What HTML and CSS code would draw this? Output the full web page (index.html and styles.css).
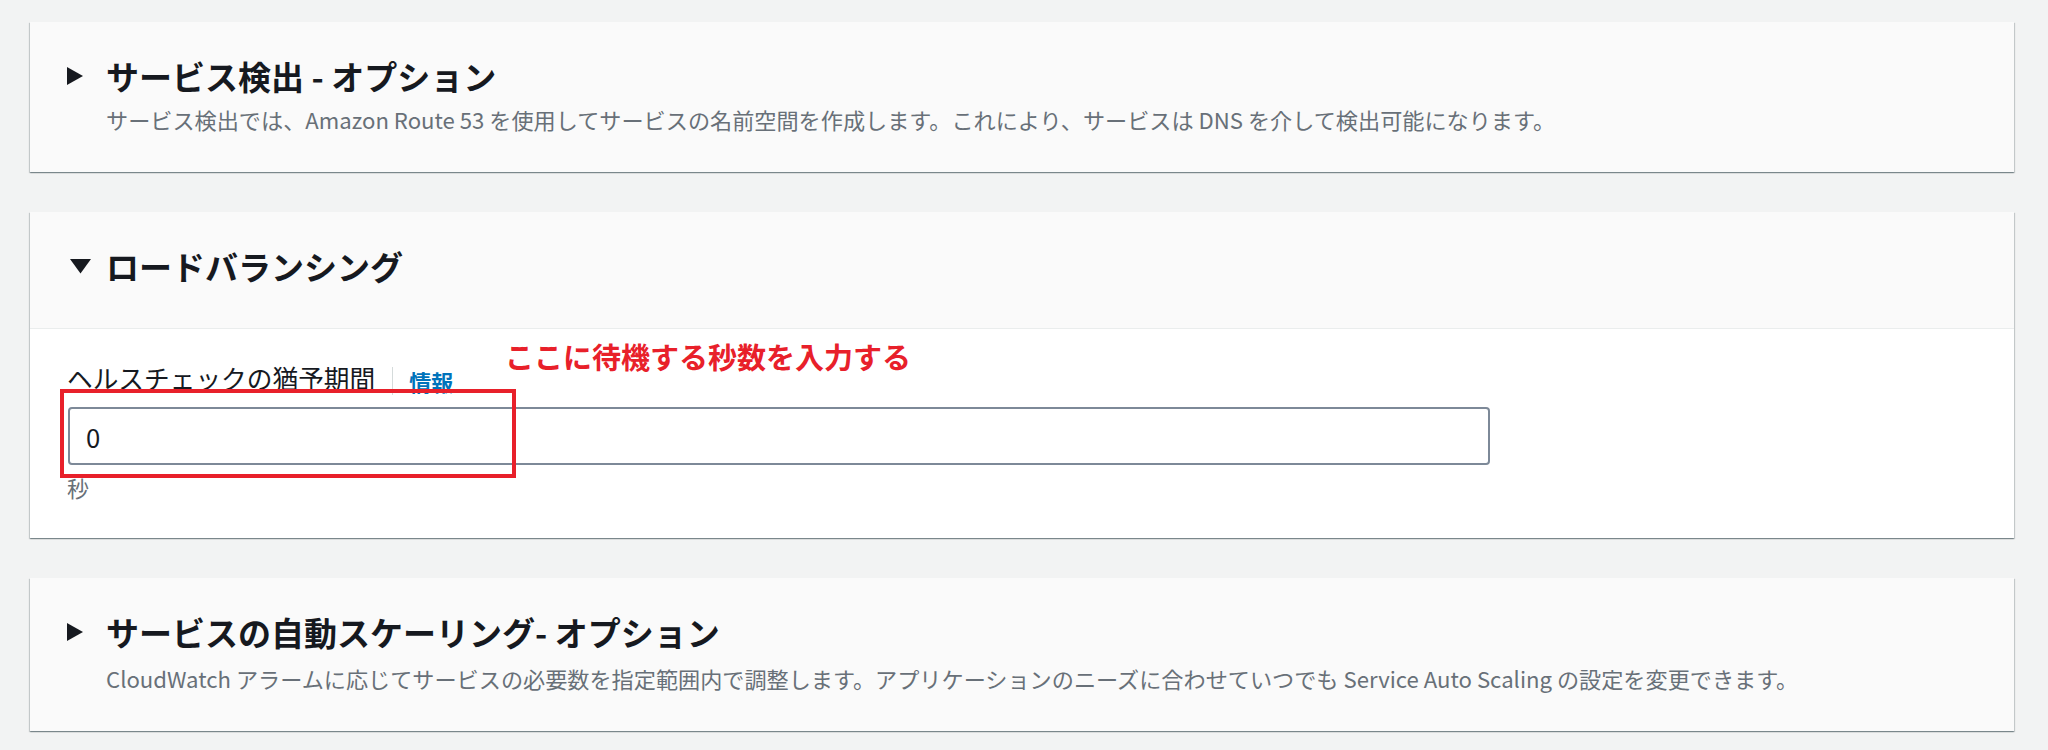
FILE: index.html
```html
<!DOCTYPE html>
<html lang="ja">

<head>
  <title>サービスの設定</title>
  <meta charset="utf-8">
  <meta name="viewport" content="width=device-width, initial-scale=1">

  <link rel="stylesheet" href="styles.css">
</head>

<body>

  <div class="page">

    <!-- service discovery, collapsed -->
    <div class="panel">
      <div class="panel-header">
        <div class="caret">
          <svg width="32" height="40" viewBox="0 0 32 40"><polygon points="5,11 21,20 5,29" fill="#16191f"/></svg>
        </div>
        <div class="heading">
          <h2 class="title">サービス検出 - オプション</h2>
          <div class="desc">サービス検出では、Amazon Route 53 を使用してサービスの名前空間を作成します。これにより、サービスは DNS を介して検出可能になります。</div>
        </div>
      </div>
    </div>

    <!-- load balancing, expanded -->
    <div class="panel">
      <div class="panel-header open">
        <div class="caret">
          <svg width="32" height="40" viewBox="0 0 32 40"><polygon points="8,13 29,13 18.5,27.5" fill="#16191f"/></svg>
        </div>
        <div class="heading">
          <h2 class="title">ロードバランシング</h2>
        </div>
      </div>
      <div class="panel-body">
        <div class="field-label">
          <span>ヘルスチェックの猶予期間</span>
          <span class="info">情報</span>
        </div>
        <input class="text-input" type="text" value="0">
        <div class="hint">秒</div>

        <div class="note">ここに待機する秒数を入力する</div>
        <div class="mark"></div>
      </div>
    </div>

    <!-- auto scaling, collapsed -->
    <div class="panel">
      <div class="panel-header">
        <div class="caret">
          <svg width="32" height="40" viewBox="0 0 32 40"><polygon points="5,11 21,20 5,29" fill="#16191f"/></svg>
        </div>
        <div class="heading">
          <h2 class="title">サービスの自動スケーリング- オプション</h2>
          <div class="desc desc-wide">CloudWatch アラームに応じてサービスの必要数を指定範囲内で調整します。アプリケーションのニーズに合わせていつでも Service Auto Scaling の設定を変更できます。</div>
        </div>
      </div>
    </div>

  </div>

</body>

</html>
```

FILE: styles.css
```css
    body {
      margin: 0;
      background-color: #f2f3f3;
      font-family: "Noto Sans CJK JP", "Noto Sans", sans-serif;
      color: #16191f;
    }

    .page {
      padding: 22px 34px 0 30px;
    }

    .panel {
      background: #fafafa;
      box-shadow: 0 1px 1px 0 rgba(0, 28, 36, 0.3), 1px 1px 1px 0 rgba(0, 28, 36, 0.15), -1px 1px 1px 0 rgba(0, 28, 36, 0.15);
      margin-bottom: 40px;
    }

    .panel-header {
      display: flex;
      align-items: flex-start;
      gap: 12px;
      padding: 34px 30px 38px 32px;
    }

    .panel-header.open {
      padding-bottom: 42px;
      border-bottom: 1px solid #eaeded;
    }

    .caret {
      width: 32px;
      height: 40px;
      flex: none;
    }

    .caret svg {
      display: block;
    }

    .title {
      margin: 0;
      font-size: 33px;
      line-height: 40px;
      font-weight: bold;
      color: #16191f;
    }

    .desc {
      margin-top: 8px;
      font-size: 22.15px;
      line-height: 30px;
      color: #687078;
    }

    .desc-wide {
      margin-top: 11px;
    }

    .panel-body {
      position: relative;
      background: #ffffff;
      padding: 32px 37px 36px 37px;
    }

    .field-label {
      display: flex;
      align-items: center;
      font-size: 25.7px;
      line-height: 34px;
    }

    .info {
      margin-left: 17px;
      padding-left: 16px;
      border-left: 1px solid #d5dbdb;
      font-size: 22px;
      font-weight: bold;
      color: #0073bb;
      line-height: 28px;
      margin-top: 6px;
    }

    .text-input {
      display: block;
      box-sizing: border-box;
      width: 1422px;
      height: 58px;
      margin: 12px 0 0 1px;
      padding: 0 16px;
      border: 2px solid #7d8998;
      border-radius: 4px;
      font-family: "Noto Sans CJK JP", "Noto Sans", sans-serif;
      font-size: 25.7px;
      color: #16191f;
      background: #ffffff;
    }

    .hint {
      margin-top: 7px;
      font-size: 22px;
      line-height: 30px;
      color: #687078;
    }

    /* red callout laid over the field */
    .note {
      position: absolute;
      left: 475px;
      top: 9px;
      font-size: 29px;
      line-height: 36px;
      font-weight: bold;
      color: #e8202a;
    }

    .mark {
      position: absolute;
      left: 30px;
      top: 60px;
      width: 456px;
      height: 89px;
      box-sizing: border-box;
      border: 4px solid #e8202a;
    }
```
